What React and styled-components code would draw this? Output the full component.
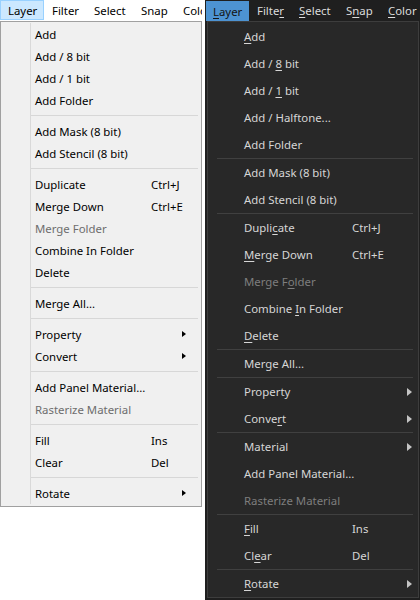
import React from 'react';
import styled, { createGlobalStyle } from 'styled-components';

const Global = createGlobalStyle`
  html, body { margin: 0; padding: 0; background: #ffffff; }
  body { font-family: "Noto Sans", "Open Sans", sans-serif; font-size: 11.4px; }
  #root { width: 420px; height: 600px; }
  * { box-sizing: border-box; }
`;

const Page = styled.div`
  display: flex;
  width: 420px;
  height: 600px;
  overflow: hidden;
`;

const Pane = styled.div`
  display: flex;
  flex-direction: column;
  flex: none;
  width: ${p => (p.$dark ? '215px' : '205px')};
  height: 600px;
  background: ${p => (p.$dark ? '#1f1f1f' : '#ffffff')};
`;

const MenuBar = styled.div`
  display: flex;
  align-items: flex-start;
  height: 21px;
  width: ${p => (p.$dark ? '215px' : '202px')};
  overflow: hidden;
  flex: none;
`;

const BarItem = styled.div`
  display: flex;
  align-items: center;
  flex: none;
  width: ${p => p.$w}px;
  height: ${p => (p.$dark && p.$active ? '20px' : '20px')};
  margin-top: ${p => (p.$dark && p.$active ? '1px' : '0')};
  margin-left: ${p => (p.$dark && p.$active ? '1px' : '0')};
  padding-left: ${p => (p.$dark && p.$active ? '7px' : '8px')};
  white-space: nowrap;
  color: ${p => (p.$dark ? (p.$active ? '#141414' : '#dcdcdc') : '#000000')};
  background: ${p =>
    p.$active ? (p.$dark ? '#4d93d2' : '#cce8ff') : 'transparent'};
  border: ${p =>
    p.$active && !p.$dark ? '1px solid #99d1ff' : '0'};
  padding-left: ${p => (p.$active && !p.$dark ? '7px' : p.$dark && p.$active ? '7px' : '8px')};
`;

const Popup = styled.div`
  display: flex;
  flex: none;
  width: ${p => (p.$dark ? '212px' : '202px')};
  margin-left: ${p => (p.$dark ? '2px' : '0')};
  border: 1px solid ${p => (p.$dark ? '#3d3d3d' : '#a0a0a0')};
  background: ${p => (p.$dark ? '#282828' : '#f0f0f0')};
  padding: ${p => (p.$dark ? '1px 0 0' : '1px 0 2px')};
`;

const Gutter = styled.div`
  width: 30px;
  flex: none;
  border-right: 1px solid #d9d9d9;
`;

const List = styled.div`
  display: flex;
  flex-direction: column;
  flex: 1;
`;

const Item = styled.div`
  display: flex;
  align-items: center;
  height: ${p => (p.$dark ? '27px' : '22px')};
  padding-left: ${p => (p.$dark ? '36px' : '4px')};
  color: ${p =>
    p.$dark
      ? p.$disabled ? '#7e7e7e' : '#d6d6d6'
      : p.$disabled ? '#6d6d6d' : '#000000'};
  white-space: nowrap;
`;

const Label = styled.span`
  flex: none;
  width: ${p => (p.$dark ? '108px' : '116px')};
`;

const Shortcut = styled.span`
  flex: 1;
`;

const Mn = styled.span`
  text-decoration: underline;
  text-underline-offset: 2px;
  text-decoration-thickness: 1px;
`;

const Arrow = styled.span`
  flex: none;
  width: 0;
  height: 0;
  margin-right: ${p => (p.$dark ? '6px' : '15px')};
  border-left: ${p => (p.$dark ? '5px solid #c4c4c4' : '4px solid #000000')};
  border-top: ${p => (p.$dark ? '4.5px' : '3.5px')} solid transparent;
  border-bottom: ${p => (p.$dark ? '4.5px' : '3.5px')} solid transparent;
`;

const Separator = styled.div`
  flex: none;
  height: 1px;
  background: ${p => (p.$dark ? '#404040' : '#d7d7d7')};
  margin: ${p => (p.$dark ? '0 5px 0 9px' : '4px 3px 4px 0')};
`;

function Text({ label, u, dark }) {
  if (!dark || u === undefined || u < 0) return <>{label}</>;
  return (
    <>
      {label.slice(0, u)}
      <Mn>{label[u]}</Mn>
      {label.slice(u + 1)}
    </>
  );
}

const barItems = [
  { label: 'Layer', u: 0, w: 44, active: true },
  { label: 'Filter', u: 5, w: 42 },
  { label: 'Select', u: 0, w: 47 },
  { label: 'Snap', u: 1, w: 42 },
  { label: 'Color', u: 0, w: 40 },
];

const lightMenu = [
  [
    { label: 'Add' },
    { label: 'Add / 8 bit' },
    { label: 'Add / 1 bit' },
    { label: 'Add Folder' },
  ],
  [{ label: 'Add Mask (8 bit)' }, { label: 'Add Stencil (8 bit)' }],
  [
    { label: 'Duplicate', sc: 'Ctrl+J' },
    { label: 'Merge Down', sc: 'Ctrl+E' },
    { label: 'Merge Folder', disabled: true },
    { label: 'Combine In Folder' },
    { label: 'Delete' },
  ],
  [{ label: 'Merge All...' }],
  [
    { label: 'Property', sub: true },
    { label: 'Convert', sub: true },
  ],
  [
    { label: 'Add Panel Material...' },
    { label: 'Rasterize Material', disabled: true },
  ],
  [
    { label: 'Fill', sc: 'Ins' },
    { label: 'Clear', sc: 'Del' },
  ],
  [{ label: 'Rotate', sub: true }],
];

const darkMenu = [
  [
    { label: 'Add', u: 0 },
    { label: 'Add / 8 bit', u: 6 },
    { label: 'Add / 1 bit', u: 6 },
    { label: 'Add / Halftone...' },
    { label: 'Add Folder' },
  ],
  [{ label: 'Add Mask (8 bit)' }, { label: 'Add Stencil (8 bit)' }],
  [
    { label: 'Duplicate', u: 5, sc: 'Ctrl+J' },
    { label: 'Merge Down', u: 0, sc: 'Ctrl+E' },
    { label: 'Merge Folder', u: 7, disabled: true },
    { label: 'Combine In Folder', u: 8 },
    { label: 'Delete', u: 0 },
  ],
  [{ label: 'Merge All...' }],
  [
    { label: 'Property', sub: true },
    { label: 'Convert', u: 5, sub: true },
  ],
  [
    { label: 'Material', sub: true },
    { label: 'Add Panel Material...' },
    { label: 'Rasterize Material', disabled: true },
  ],
  [
    { label: 'Fill', u: 0, sc: 'Ins' },
    { label: 'Clear', u: 2, sc: 'Del' },
  ],
  [{ label: 'Rotate', u: 0, sub: true }],
];

function Menu({ dark, sections }) {
  return (
    <Pane $dark={dark}>
      <MenuBar $dark={dark}>
        {barItems.map(b => (
          <BarItem
            key={b.label}
            $dark={dark}
            $active={b.active}
            $w={b.active && dark ? b.w - 1 : b.w}
          >
            <Text label={b.label} u={b.u} dark={dark} />
          </BarItem>
        ))}
      </MenuBar>
      <Popup $dark={dark}>
        {!dark && <Gutter />}
        <List>
          {sections.map((sec, si) => (
            <React.Fragment key={si}>
              {si > 0 && <Separator $dark={dark} />}
              {sec.map(it => (
                <Item key={it.label} $dark={dark} $disabled={it.disabled}>
                  <Label $dark={dark}>
                    <Text label={it.label} u={it.u} dark={dark} />
                  </Label>
                  <Shortcut>{it.sc || ''}</Shortcut>
                  {it.sub && <Arrow $dark={dark} />}
                </Item>
              ))}
            </React.Fragment>
          ))}
        </List>
      </Popup>
    </Pane>
  );
}

export default function App() {
  return (
    <>
      <Global />
      <Page>
        <Menu dark={false} sections={lightMenu} />
        <Menu dark sections={darkMenu} />
      </Page>
    </>
  );
}
